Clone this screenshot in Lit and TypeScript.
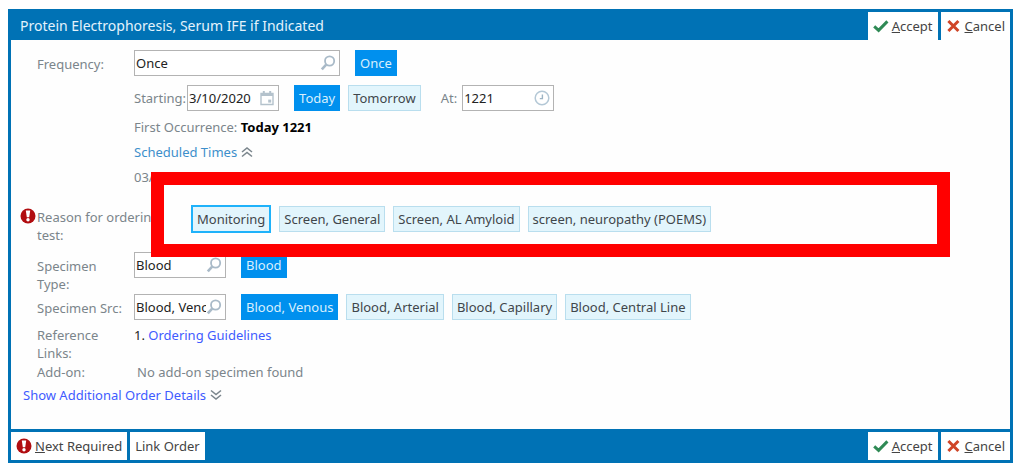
import { LitElement, html, css, svg } from "lit";
import { customElement, property } from "lit/decorators.js";

const alertIcon = html`<svg class="alert" width="16" height="16" viewBox="0 0 16 16" role="img" aria-label="Required">
  <circle cx="8" cy="8" r="7.5" fill="#b10d10" />
  <path d="M5.8 2.6h4.4L9.2 9.2H6.8z" fill="#fff" />
  <circle cx="8" cy="11.8" r="1.7" fill="#fff" />
</svg>`;

const checkIcon = html`<svg width="16" height="14" viewBox="0 0 16 14" aria-hidden="true">
  <path d="M1.2 7.4 5.6 11.4 14.4 2.4" fill="none" stroke="#2f8a55" stroke-width="3" />
</svg>`;

const crossIcon = html`<svg width="16" height="14" viewBox="0 0 16 14" aria-hidden="true">
  <path d="M2.4 2 12.4 12M12.4 2 2.4 12" fill="none" stroke="#cf4527" stroke-width="3" />
</svg>`;

const chevrons = (down: boolean) => html`<svg width="12" height="12" viewBox="0 0 12 12" aria-hidden="true">
  <path
    d=${down ? "M1 1.5 6 5.5 11 1.5M1 6 6 10 11 6" : "M1 6 6 2 11 6M1 10.5 6 6.5 11 10.5"}
    fill="none" stroke="#7b868d" stroke-width="1.6" />
</svg>`;

const fieldIcons = {
  search: svg`<circle cx="9.6" cy="6" r="4.6" fill="none" stroke="#a9bac8" stroke-width="1.8" />
    <path d="M6.2 9.6 1.8 14.4" stroke="#a9bac8" stroke-width="2.6" />`,
  calendar: svg`<path d="M2 3.5h12v11H2z" fill="none" stroke="#b4c2cc" stroke-width="1.4" />
    <path d="M2 5h12M4.8 1v3M11.2 1v3" stroke="#b4c2cc" stroke-width="2" />
    <path d="M9.2 9.6h3v3h-3z" fill="#b4c2cc" />`,
  clock: svg`<circle cx="8" cy="8" r="6.8" fill="none" stroke="#b4c8d6" stroke-width="1.5" />
    <path d="M8.4 4.4v4.2H5.8" fill="none" stroke="#9db4c4" stroke-width="1.4" />`,
};

@customElement("order-field")
class OrderField extends LitElement {
  @property() value = "";
  @property() label = "";
  @property() icon: keyof typeof fieldIcons = "search";

  static styles = css`
    :host {
      display: flex;
      align-items: center;
      box-sizing: border-box;
      height: 26px;
      padding: 0 3px 0 1px;
      border: 1px solid #b3b3b3;
      background: #fff;
    }
    .input {
      flex: 1;
      min-width: 0;
      padding: 0;
      border: 0;
      outline: 0;
      background: transparent;
      color: #222;
      font: inherit;
    }
    .icon {
      flex: none;
    }
  `;

  render() {
    return html`<input class="input" type="text" aria-label=${this.label} .value=${this.value} />
      <svg class="icon" width="16" height="16" viewBox="0 0 16 16" aria-hidden="true">${fieldIcons[this.icon]}</svg>`;
  }
}

@customElement("app-root")
class AppRoot extends LitElement {
  static styles = css`
    :host {
      display: block;
      padding: 9px 11px 8px 8px;
      background: #fff;
      font: 13px/18px "Noto Sans", "Open Sans", sans-serif;
      color: #7b858b;
    }
    .window {
      border: 3px solid #0072b5;
      background: #0072b5;
    }
    .bar {
      display: flex;
      gap: 3px;
      align-items: center;
    }
    .footer {
      padding-top: 3px;
    }
    .title {
      flex: 1;
      margin: 0;
      padding-left: 9px;
      font-size: 14px;
      font-weight: 400;
      color: #e4f3fc;
    }
    .spacer {
      flex: 1;
    }
    .action {
      display: flex;
      align-items: center;
      gap: 3px;
      height: 28px;
      padding: 0 5px;
      border: 0;
      background: #fff;
      color: #444;
      font: inherit;
    }
    .body {
      padding: 10px 9px 25px;
      background: #fefefe;
    }
    .row {
      display: grid;
      grid-template-columns: 17px 97px 1fr;
      align-items: start;
    }
    .label {
      padding-top: 5px;
      white-space: nowrap;
    }
    .plain .label {
      padding-top: 0;
    }
    .line {
      display: flex;
      flex-wrap: wrap;
      align-items: center;
      gap: 8px;
    }
    .schedule {
      display: grid;
      gap: 7px;
      padding: 9px 0 22px;
    }
    .start {
      gap: 1px;
    }
    .wide {
      width: 206px;
    }
    .narrow {
      width: 92px;
    }
    .field-gap {
      gap: 15px;
    }
    .day {
      margin: 0 19px 0 14px;
    }
    .at {
      padding-right: 4px;
    }
    .chip {
      height: 26px;
      padding: 0 4px;
      border: 1px solid #b9deee;
      background: #e2f5fc;
      color: #3f464b;
      font: inherit;
      white-space: nowrap;
    }
    .chip.on {
      border-color: #0090ee;
      background: #0090ee;
      color: #d8effd;
    }
    .chip.focus {
      height: 28px;
      border: 2px solid #1fb2fa;
    }
    strong {
      color: #000;
    }
    .toggle {
      display: inline-flex;
      align-items: center;
      gap: 4px;
      justify-self: start;
      padding: 0;
      border: 0;
      background: none;
      color: #3d8fcb;
      font: inherit;
    }
    .more {
      margin: 5px 0 0 3px;
      color: #3f5bff;
    }
    .link {
      color: #3f5bff;
      text-decoration: none;
    }
    .num {
      color: #222;
    }
    .indent {
      padding-left: 3px;
    }
    .reason {
      position: relative;
      margin-bottom: 8px;
    }
    /* The callout floats over the rows around it. */
    .callout {
      position: absolute;
      inset: -36px 51px -13px 131px;
      display: flex;
      align-items: center;
      gap: 8px;
      padding: 8px 0 0 27px;
      border: 13px solid #f00;
      background: #fefefe;
    }
    .source {
      margin: 1px 0 6px;
    }
    .addon {
      margin-top: 1px;
    }
  `;

  private chip(text: string, state = "") {
    return html`<button type="button" class="chip ${state}">${text}</button>`;
  }

  private decisions() {
    return html`<button type="button" class="action">${checkIcon}<span><u>A</u>ccept</span></button>
      <button type="button" class="action">${crossIcon}<span><u>C</u>ancel</span></button>`;
  }

  render() {
    return html`<main class="window">
      <header class="bar">
        <h1 class="title">Protein Electrophoresis, Serum IFE if Indicated</h1>
        ${this.decisions()}
      </header>
      <section class="body">
        <div class="row">
          <span></span>
          <span class="label">Frequency:</span>
          <div>
            <div class="line field-gap">
              <order-field class="wide" label="Frequency" value="Once"></order-field>
              ${this.chip("Once", "on")}
            </div>
            <div class="schedule">
              <div class="line start">
                <span>Starting:</span>
                <order-field class="narrow" label="Starting" icon="calendar" value="3/10/2020"></order-field>
                <div class="line day">${this.chip("Today", "on")}${this.chip("Tomorrow")}</div>
                <span class="at">At:</span>
                <order-field class="narrow" label="At" icon="clock" value="1221"></order-field>
              </div>
              <div>First Occurrence: <strong>Today 1221</strong></div>
              <button type="button" class="toggle">Scheduled Times ${chevrons(false)}</button>
              <div>03/10/20: 1221</div>
            </div>
          </div>
        </div>
        <div class="row plain reason">
          ${alertIcon}
          <span class="label">Reason for ordering<br />test:</span>
          <div class="callout">
            ${this.chip("Monitoring", "focus")}${this.chip("Screen, General")}
            ${this.chip("Screen, AL Amyloid")}${this.chip("screen, neuropathy (POEMS)")}
          </div>
        </div>
        <div class="row">
          <span></span>
          <span class="label">Specimen<br />Type:</span>
          <div class="line field-gap">
            <order-field class="narrow" label="Specimen Type" value="Blood"></order-field>
            ${this.chip("Blood", "on")}
          </div>
        </div>
        <div class="row source">
          <span></span>
          <span class="label">Specimen Src:</span>
          <div class="line field-gap">
            <order-field class="narrow" label="Specimen Source" value="Blood, Venous"></order-field>
            <div class="line">
              ${this.chip("Blood, Venous", "on")}${this.chip("Blood, Arterial")}
              ${this.chip("Blood, Capillary")}${this.chip("Blood, Central Line")}
            </div>
          </div>
        </div>
        <div class="row plain">
          <span></span>
          <span class="label">Reference<br />Links:</span>
          <div><span class="num">1.</span> <a class="link" href="#guidelines">Ordering Guidelines</a></div>
        </div>
        <div class="row plain addon">
          <span></span>
          <span class="label">Add-on:</span>
          <div class="indent">No add-on specimen found</div>
        </div>
        <button type="button" class="toggle more">Show Additional Order Details ${chevrons(true)}</button>
      </section>
      <footer class="bar footer">
        <button type="button" class="action">${alertIcon}<span><u>N</u>ext Required</span></button>
        <button type="button" class="action">Link Order</button>
        <span class="spacer"></span>
        ${this.decisions()}
      </footer>
    </main>`;
  }
}
